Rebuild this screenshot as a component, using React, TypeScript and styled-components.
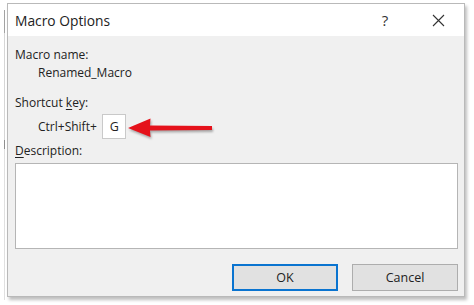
import * as React from 'react'
import styled, { createGlobalStyle } from 'styled-components'

const GlobalStyle = createGlobalStyle`
  html, body {
    margin: 0;
    padding: 0;
    background: #ffffff;
  }
  body {
    font-family: 'Open Sans', 'Noto Sans', sans-serif;
    color: #1a1a1a;
  }
`

const Page = styled.div`
  position: relative;
  width: 474px;
  height: 305px;
  padding: 3px 0 0 7px;
  box-sizing: border-box;
  overflow: hidden;
`

const BackEdge = styled.div`
  position: absolute;
  left: 4px;
  top: 10px;
  width: 1px;
  height: 290px;
  background: linear-gradient(#666 0 8%, #bbb 8% 45%, #444 45% 48%, #ccc 48% 100%);
  opacity: 0.6;
`

const Dialog = styled.div`
  width: 458px;
  height: 294px;
  display: flex;
  flex-direction: column;
  background: #f0f0f0;
  border: 1px solid #b9b9b9;
  box-shadow: 2px 3px 3px rgba(0, 0, 0, 0.25);
  box-sizing: border-box;
`

const TitleBar = styled.div`
  height: 32px;
  flex: none;
  display: flex;
  align-items: center;
  background: #ffffff;
  padding-left: 7px;
`

const Title = styled.div`
  flex: 1;
  font-size: 13.8px;
  color: #222;
`

const TitleButton = styled.div<{ width: number }>`
  width: ${({ width }) => width}px;
  display: flex;
  align-items: center;
  justify-content: center;
  color: #333;
  font-size: 15px;
`

const Body = styled.div`
  flex: 1;
  display: flex;
  flex-direction: column;
  padding: 11px 6px 0 7px;
`

const Label = styled.div<{ top?: number }>`
  font-size: 12px;
  line-height: 16px;
  margin-top: ${({ top }) => top || 0}px;
  color: #222;
`

const Value = styled(Label)`
  padding-left: 23px;
`

const ShortcutRow = styled.div`
  position: relative;
  display: flex;
  align-items: center;
  gap: 5px;
  margin-top: 3px;
  padding-left: 23px;
  font-size: 12px;
  color: #222;
`

const KeyBox = styled.div`
  width: 24px;
  height: 25px;
  display: flex;
  align-items: center;
  padding-left: 7px;
  box-sizing: border-box;
  background: #ffffff;
  border: 1px solid #c9c9c9;
  font-size: 12.5px;
  color: #222;
`

const Arrow = styled.svg`
  position: absolute;
  left: 111px;
  top: 3px;
  filter: drop-shadow(1px 2px 1px rgba(0, 0, 0, 0.3));
`

const TextArea = styled.div`
  margin-top: 4px;
  height: 86px;
  background: #ffffff;
  border: 1px solid #b5b5b5;
  box-sizing: border-box;
`

const Footer = styled.div`
  display: flex;
  justify-content: flex-end;
  gap: 14px;
  margin-top: 15px;
`

const Button = styled.div<{ primary?: boolean }>`
  width: 106px;
  height: 27px;
  display: flex;
  align-items: center;
  justify-content: center;
  box-sizing: border-box;
  background: #e1e1e1;
  border: ${({ primary }) => (primary ? '2px solid #0a74d0' : '1px solid #adadad')};
  font-size: 12.5px;
  color: #222;
`

const U = styled.span`
  text-decoration: underline;
  text-underline-offset: 2px;
`

export default function App() {
  return (
    <Page>
      <GlobalStyle />
      <BackEdge />
      <Dialog>
        <TitleBar>
          <Title>Macro Options</Title>
          <TitleButton width={54}>?</TitleButton>
          <TitleButton width={52}>
            <svg width="13" height="13" viewBox="0 0 13 13">
              <path d="M1 1 L12 12 M12 1 L1 12" stroke="#333" strokeWidth="1.1" fill="none" />
            </svg>
          </TitleButton>
        </TitleBar>
        <Body>
          <Label>Macro name:</Label>
          <Value top={2}>Renamed_Macro</Value>
          <Label top={14}>
            Shortcut <U>k</U>ey:
          </Label>
          <ShortcutRow>
            <span>Ctrl+Shift+</span>
            <KeyBox>G</KeyBox>
            <Arrow width="88" height="22" viewBox="0 0 88 22">
              <path
                d="M86 9 L24 8.6 L24.5 1.5 L2 11 L24.5 20 L24 13.4 L86 13 Z"
                fill="#e5121b"
              />
            </Arrow>
          </ShortcutRow>
          <Label top={4}>
            <U>D</U>escription:
          </Label>
          <TextArea />
          <Footer>
            <Button primary>OK</Button>
            <Button>Cancel</Button>
          </Footer>
        </Body>
      </Dialog>
    </Page>
  )
}
